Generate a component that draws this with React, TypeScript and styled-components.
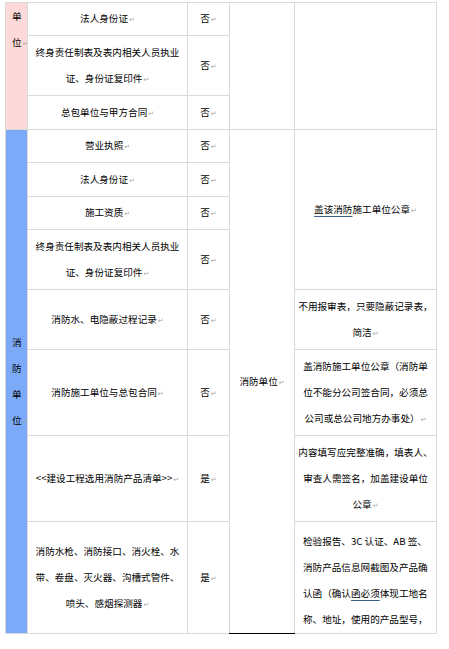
import { FC, ReactNode } from "react"
import styled, { createGlobalStyle } from "styled-components"

const GlobalStyle = createGlobalStyle`
  html, body {
    margin: 0;
    padding: 0;
    background: #fff;
  }
  body {
    font-family: "Noto Sans CJK SC", "Noto Sans", sans-serif;
    color: #000;
  }
`

const Page = styled.div`
  padding: 2px 0 0 5px;
`

const Sheet = styled.table`
  border-collapse: collapse;
  table-layout: fixed;
  width: 431px;
`

const Col = styled.col<{ $w: number }>`
  width: ${(p) => p.$w}px;
`

const Row = styled.tr<{ $h: number }>`
  height: ${(p) => p.$h}px;
`

const Cell = styled.td<{
  $align?: "left" | "center"
  $valign?: "top" | "middle"
  $bg?: string
  $pad?: number
  $bottom?: string
}>`
  border: 1px solid #d9d9d9;
  ${(p) => (p.$bottom ? `border-bottom: 1px solid ${p.$bottom};` : "")}
  background: ${(p) => p.$bg || "#fff"};
  text-align: ${(p) => p.$align || "center"};
  vertical-align: ${(p) => p.$valign || "middle"};
  padding: 0 ${(p) => (p.$pad ?? 2)}px;
  font-size: 9.6px;
  line-height: 26px;
  overflow: hidden;
`

const Line = styled.div`
  white-space: nowrap;
`

const Clip = styled.div<{ $h: number }>`
  height: ${(p) => p.$h}px;
  overflow: hidden;
  padding-top: 6px;
  box-sizing: border-box;
`

const Mark = styled.span`
  font-family: "DejaVu Sans", sans-serif;
  font-size: 7px;
  color: #a6a6a6;
  margin-left: 1px;
`

const Squiggle = styled.span`
  text-decoration: underline;
  text-decoration-color: #3d5f87;
  text-decoration-thickness: 1px;
  text-underline-offset: 3px;
`

const PINK = "#fdd9d9"
const BLUE = "#7caaf8"

const Lines: FC<{ lines: ReactNode[]; mark?: boolean }> = ({ lines, mark = true }) => (
  <>
    {lines.map((l, i) => (
      <Line key={i}>
        {l}
        {mark && i === lines.length - 1 && <Mark>↵</Mark>}
      </Line>
    ))}
  </>
)

const App: FC = () => {
  return (
    <Page>
      <GlobalStyle />
      <Sheet>
        <colgroup>
          <Col $w={22} />
          <Col $w={160} />
          <Col $w={42} />
          <Col $w={65} />
          <Col $w={142} />
        </colgroup>
        <tbody>
          <Row $h={33}>
            <Cell rowSpan={3} $bg={PINK} $align="left" $valign="top" $pad={6}>
              <Lines lines={["单", "位"]} />
            </Cell>
            <Cell>
              <Lines lines={["法人身份证"]} />
            </Cell>
            <Cell>
              <Lines lines={["否"]} />
            </Cell>
            <Cell rowSpan={3} />
            <Cell rowSpan={3} />
          </Row>
          <Row $h={60}>
            <Cell>
              <Lines lines={["终身责任制表及表内相关人员执业", "证、身份证复印件"]} />
            </Cell>
            <Cell>
              <Lines lines={["否"]} />
            </Cell>
          </Row>
          <Row $h={34}>
            <Cell>
              <Lines lines={["总包单位与甲方合同"]} />
            </Cell>
            <Cell>
              <Lines lines={["否"]} />
            </Cell>
          </Row>

          <Row $h={33}>
            <Cell rowSpan={8} $bg={BLUE} $align="left" $pad={6}>
              <Lines lines={["消", "防", "单", "位"]} />
            </Cell>
            <Cell>
              <Lines lines={["营业执照"]} />
            </Cell>
            <Cell>
              <Lines lines={["否"]} />
            </Cell>
            <Cell rowSpan={8} $bottom="#000">
              <Lines lines={["消防单位"]} />
            </Cell>
            <Cell rowSpan={4}>
              <Lines
                lines={[
                  <>
                    <Squiggle>盖该消防</Squiggle>施工单位公章
                  </>,
                ]}
              />
            </Cell>
          </Row>
          <Row $h={34}>
            <Cell>
              <Lines lines={["法人身份证"]} />
            </Cell>
            <Cell>
              <Lines lines={["否"]} />
            </Cell>
          </Row>
          <Row $h={33}>
            <Cell>
              <Lines lines={["施工资质"]} />
            </Cell>
            <Cell>
              <Lines lines={["否"]} />
            </Cell>
          </Row>
          <Row $h={60}>
            <Cell>
              <Lines lines={["终身责任制表及表内相关人员执业", "证、身份证复印件"]} />
            </Cell>
            <Cell>
              <Lines lines={["否"]} />
            </Cell>
          </Row>
          <Row $h={60}>
            <Cell>
              <Lines lines={["消防水、电隐蔽过程记录"]} />
            </Cell>
            <Cell>
              <Lines lines={["否"]} />
            </Cell>
            <Cell>
              <Lines lines={["不用报审表，只要隐蔽记录表，", "简洁"]} />
            </Cell>
          </Row>
          <Row $h={86}>
            <Cell>
              <Lines lines={["消防施工单位与总包合同"]} />
            </Cell>
            <Cell>
              <Lines lines={["否"]} />
            </Cell>
            <Cell>
              <Lines
                lines={[
                  "盖消防施工单位公章（消防单",
                  "位不能分公司签合同，必须总",
                  "公司或总公司地方办事处）",
                ]}
              />
            </Cell>
          </Row>
          <Row $h={86}>
            <Cell>
              <Lines lines={["<<建设工程选用消防产品清单>>"]} />
            </Cell>
            <Cell>
              <Lines lines={["是"]} />
            </Cell>
            <Cell>
              <Lines
                lines={["内容填写应完整准确，填表人、", "审查人需签名，加盖建设单位", "公章"]}
              />
            </Cell>
          </Row>
          <Row $h={112}>
            <Cell>
              <Lines
                lines={[
                  "消防水枪、消防接口、消火栓、水",
                  "带、卷盘、灭火器、沟槽式管件、",
                  "喷头、感烟探测器",
                ]}
              />
            </Cell>
            <Cell>
              <Lines lines={["是"]} />
            </Cell>
            <Cell $align="left" $valign="top" $pad={8}>
              <Clip $h={111}>
                <Lines
                  mark={false}
                  lines={[
                    "检验报告、3C 认证、AB 签、",
                    "消防产品信息网截图及产品确",
                    <>
                      认函（确认<Squiggle>函必须</Squiggle>体现工地名
                    </>,
                    "称、地址，使用的产品型号，",
                  ]}
                />
              </Clip>
            </Cell>
          </Row>
        </tbody>
      </Sheet>
    </Page>
  )
}

export default App
